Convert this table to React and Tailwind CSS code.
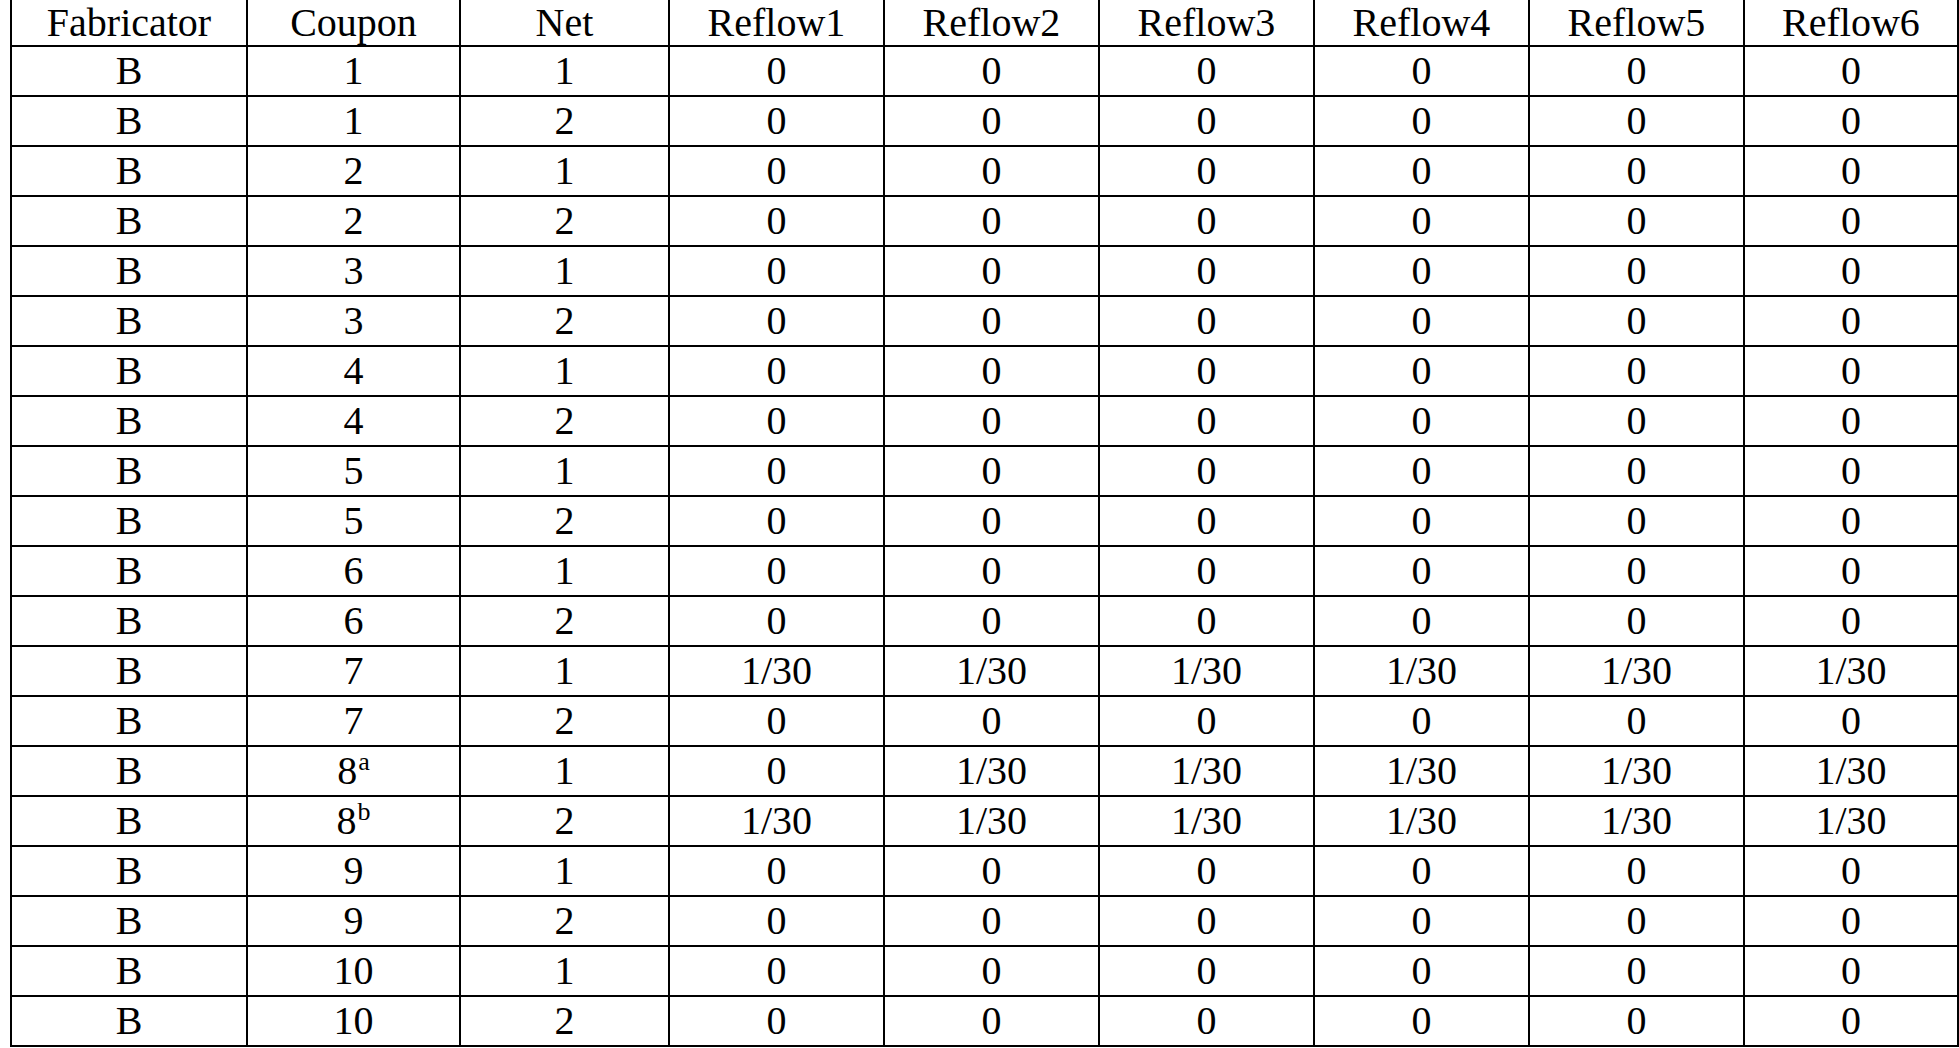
import React from 'react';

const widths = ['w-[236px]', 'w-[213px]', 'w-[209px]', 'w-[215px]', 'w-[215px]', 'w-[215px]', 'w-[215px]', 'w-[215px]', 'w-[214px]'];

const headers = ['Fabricator', 'Coupon', 'Net', 'Reflow1', 'Reflow2', 'Reflow3', 'Reflow4', 'Reflow5', 'Reflow6'];

const zeros = ['0', '0', '0', '0', '0', '0'];
const hits = ['1/30', '1/30', '1/30', '1/30', '1/30', '1/30'];

const rows = [];
for (let c = 1; c <= 10; c++) {
  for (let n = 1; n <= 2; n++) {
    let coupon = String(c);
    let sup = null;
    let vals = zeros;
    if (c === 7 && n === 1) vals = hits;
    if (c === 8) {
      sup = n === 1 ? 'a' : 'b';
      vals = n === 1 ? ['0', '1/30', '1/30', '1/30', '1/30', '1/30'] : hits;
    }
    rows.push({ coupon, sup, net: String(n), vals });
  }
}

const Cell = ({ i, h, children }) => (
  <div className={`${widths[i]} ${h} shrink-0 flex items-center justify-center border-r-2 border-b-2 border-black`}>
    {children}
  </div>
);

export default function App() {
  return (
    <div className="w-[1959px] h-[1048px] bg-white overflow-hidden pl-[10px] text-black text-[40px] leading-none" style={{ fontFamily: '"Liberation Serif", "Times New Roman", serif' }}>
      <div className="flex flex-col border-l-2 border-black w-fit">
        <div className="flex">
          {headers.map((h, i) => (
            <Cell key={h} i={i} h="h-[47px]">{h}</Cell>
          ))}
        </div>
        {rows.map((r, k) => (
          <div key={k} className="flex">
            <Cell i={0} h="h-[50px]">B</Cell>
            <Cell i={1} h="h-[50px]">
              <span className="whitespace-nowrap">
                {r.coupon}
                {r.sup && <span className="text-[26px] relative top-[-14px] ml-[1px]">{r.sup}</span>}
              </span>
            </Cell>
            <Cell i={2} h="h-[50px]">{r.net}</Cell>
            {r.vals.map((v, j) => (
              <Cell key={j} i={3 + j} h="h-[50px]">{v}</Cell>
            ))}
          </div>
        ))}
      </div>
    </div>
  );
}
